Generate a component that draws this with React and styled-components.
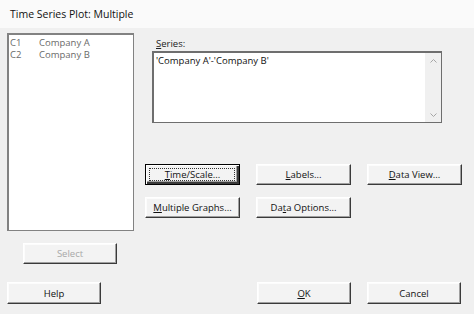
import styled, { createGlobalStyle, css } from 'styled-components';

const GlobalStyle = createGlobalStyle`
  * {
    margin: 0;
    padding: 0;
    box-sizing: border-box;
  }
  body {
    background: #f0f0f0;
    font-family: 'Open Sans', 'Segoe UI', sans-serif;
    -webkit-font-smoothing: antialiased;
  }
`

const Dialog = styled.div`
  width: 474px;
  height: 314px;
  background: #f0f0f0;
  display: flex;
  flex-direction: column;
  overflow: hidden;
`
const TitleBar = styled.div`
  height: 28px;
  background: #fafafa;
  padding-left: 10px;
  font-size: 10.5px;
  line-height: 28px;
  color: #111;
`
const Body = styled.div`
  display: grid;
  grid-template-columns: 127px 1fr;
  column-gap: 11px;
  padding: 5px 0 0 7px;
`
const LeftCol = styled.div`
  display: flex;
  flex-direction: column;
`
const VarList = styled.div`
  height: 198px;
  background: #fff;
  border: 1px solid #828282;
  border-left-width: 2px;
  border-top-width: 2px;
  padding: 2px 0 0 1px;
`
const VarRow = styled.div`
  display: flex;
  font-size: 9.5px;
  line-height: 12px;
  color: #6a6a6a;
`
const VarCol = styled.span`
  width: 29px;
`
const RightCol = styled.div`
  display: flex;
  flex-direction: column;
`
const FieldLabel = styled.label`
  font-size: 9.5px;
  color: #222;
  padding: 4px 0 0 11px;
  line-height: 13px;
`
const SeriesBox = styled.div`
  margin: 1px 0 0 7px;
  width: 290px;
  height: 72px;
  background: #fff;
  border: 1px solid #6e6e6e;
  border-left-width: 2px;
  border-top-width: 2px;
  display: flex;
`
const SeriesText = styled.div`
  flex: 1;
  font-size: 9.5px;
  line-height: 12px;
  padding: 2px 0 0 2px;
  color: #111;
`
const ScrollBar = styled.div`
  width: 16px;
  background: #f0f0f0;
  display: flex;
  flex-direction: column;
  justify-content: space-between;
  align-items: center;
  padding: 6px 0 5px;
`
const ButtonGrid = styled.div`
  display: grid;
  grid-template-columns: repeat(3, 95px);
  column-gap: 16px;
  row-gap: 12px;
  margin-top: 41px;
`
const Button = styled.button`
  position: relative;
  width: 95px;
  height: 21px;
  font-family: inherit;
  font-size: 9.5px;
  color: ${p => (p.disabled ? '#a8a8a8' : '#111')};
  background: #f3f3f3;
  border: 1px solid;
  border-color: #ffffff #3a3a3a #3a3a3a #ffffff;
  box-shadow: inset -1px -1px #a0a0a0, inset 1px 1px #fcfcfc;
  ${p => p.$default && css`
    border-color: #000;
    box-shadow: inset 1px 1px #fff, inset -2px -2px #3a3a3a, inset -3px -3px #a0a0a0;
    &::after {
      content: '';
      position: absolute;
      inset: 3px 4px 3px 3px;
      border: 1px dotted #333;
    }
  `}
`
const SelectButton = styled(Button)`
  width: 94px;
  margin: 12px 0 0 16px;
`
const Footer = styled.div`
  display: flex;
  align-items: center;
  padding: 18px 13px 0 7px;
  gap: 16px;
`
const Spacer = styled.div`
  flex: 1;
`
const FooterButton = styled(Button)`
  width: 94px;
  height: 22px;
`
const Key = styled.u`
  text-underline-offset: 1px;
`

const Chevron = ({ up }) => (
  <svg width="7" height="4" viewBox="0 0 7 4">
    <path d={up ? 'M0.5 3.5 L3.5 0.5 L6.5 3.5' : 'M0.5 0.5 L3.5 3.5 L6.5 0.5'} fill="none" stroke="#a6a6a6" strokeWidth="1" />
  </svg>
)

function App() {
  const columns = [
    { id: 'C1', name: 'Company A' },
    { id: 'C2', name: 'Company B' },
  ]

  return (
    <>
      <GlobalStyle />
      <Dialog>
        <TitleBar>Time Series Plot: Multiple</TitleBar>
        <Body>
          <LeftCol>
            <VarList>
              {columns.map(c => (
                <VarRow key={c.id}>
                  <VarCol>{c.id}</VarCol>
                  <span>{c.name}</span>
                </VarRow>
              ))}
            </VarList>
            <SelectButton disabled>Select</SelectButton>
          </LeftCol>
          <RightCol>
            <FieldLabel><Key>S</Key>eries:</FieldLabel>
            <SeriesBox>
              <SeriesText>'Company A'-'Company B'</SeriesText>
              <ScrollBar>
                <Chevron up />
                <Chevron />
              </ScrollBar>
            </SeriesBox>
            <ButtonGrid>
              <Button $default><Key>T</Key>ime/Scale...</Button>
              <Button><Key>L</Key>abels...</Button>
              <Button><Key>D</Key>ata View...</Button>
              <Button><Key>M</Key>ultiple Graphs...</Button>
              <Button>Da<Key>t</Key>a Options...</Button>
            </ButtonGrid>
          </RightCol>
        </Body>
        <Footer>
          <FooterButton>Help</FooterButton>
          <Spacer />
          <FooterButton><Key>O</Key>K</FooterButton>
          <FooterButton>Cancel</FooterButton>
        </Footer>
      </Dialog>
    </>
  )
}

export default App;
